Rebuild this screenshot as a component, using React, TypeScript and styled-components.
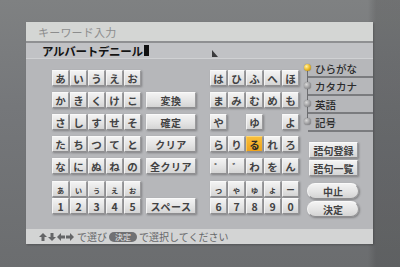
import styled, { createGlobalStyle, css } from 'styled-components';

const GlobalStyle = createGlobalStyle`
    html, body {
        margin: 0;
        padding: 0;
    }
    body {
        font-family: "Noto Sans CJK JP", "Noto Sans", sans-serif;
    }
`

const Screen = styled.div`
    width: 400px;
    height: 267px;
    box-sizing: border-box;
    padding: 22px 27px 0 26px;
    background:
        linear-gradient(90deg, rgba(0,0,0,0) 0%, rgba(0,0,0,0) 92%, rgba(0,0,0,0.12) 94%, rgba(0,0,0,0.12) 100%),
        linear-gradient(180deg, #7f8182 0%, #75777a 40%, #6b6d6f 100%);
    overflow: hidden;
`

const Panel = styled.div`
    width: 347px;
    height: 222px;
    display: flex;
    flex-direction: column;
    background: #b6b7ba;
    box-shadow: 1px 1px 2px rgba(0,0,0,0.25);
`

const TitleBar = styled.div`
    height: 19px;
    display: flex;
    align-items: center;
    padding-left: 12px;
    background: #d4d6d4;
    color: #8c8d8d;
    font-size: 11px;
    letter-spacing: 0.2px;
`

const InputRow = styled.div`
    height: 15px;
    display: flex;
    align-items: center;
    padding-left: 16px;
    background: #c1c2c5;
    border-top: 2px solid #8f9092;
    border-bottom: 1px solid #d0d1d3;
    position: relative;
`

const InputText = styled.span`
    font-size: 11.5px;
    font-weight: 700;
    color: #141414;
    letter-spacing: -0.3px;
`

const Caret = styled.span`
    display: inline-block;
    width: 5px;
    height: 11px;
    background: #111;
    margin-left: 1px;
`

const Pointer = styled.svg`
    position: absolute;
    left: 186px;
    top: 7px;
`

const Body = styled.div`
    flex: 1;
    display: flex;
    padding: 11px 0 0 26px;
`

const KeyGrid = styled.div<{ cols: string }>`
    display: grid;
    grid-template-columns: ${p => p.cols};
    grid-template-rows: repeat(4, 22px) 23px 17px 17px;
    column-gap: 1px;
    align-items: start;
`

const Key = styled.div<{ active?: boolean; small?: boolean }>`
    height: 16px;
    display: flex;
    align-items: center;
    justify-content: center;
    box-sizing: border-box;
    background: linear-gradient(180deg, #f3f3f3 0%, #e2e2e2 60%, #d4d4d4 100%);
    border-top: 1px solid #fafafa;
    border-left: 1px solid #f4f4f4;
    border-right: 1px solid #9a9a9c;
    border-bottom: 1px solid #8e8e90;
    box-shadow: 1px 1px 2px rgba(0,0,0,0.3);
    color: #424243;
    font-size: ${p => (p.small ? '8.5px' : '10.5px')};
    font-weight: 700;
    ${p => p.active && css`
        background: linear-gradient(180deg, #f8be3a 0%, #eea21a 100%);
        border-top-color: #fbd77a;
        border-left-color: #f8c85a;
        color: #2a2a2a;
    `}
`

const FuncKey = styled(Key)`
    width: 50px;
    justify-self: end;
    font-size: 10px;
    letter-spacing: 0.5px;
`

const Gap = styled.div``

const RightKeys = styled.div`
    margin-left: 14px;
`

const SideColumn = styled.div`
    margin-left: 1px;
    margin-top: -10px;
    flex: 1;
    display: flex;
    flex-direction: column;
`

const ModeList = styled.div`
    position: relative;
    padding-left: 8px;
    &::before {
        content: '';
        position: absolute;
        left: 7px;
        top: 8px;
        height: 56px;
        width: 1px;
        background: #6c6d70;
    }
`

const ModeItem = styled.div`
    height: 16px;
    display: flex;
    align-items: center;
    padding-left: 7px;
    border-bottom: 2px solid #7a7b7e;
    position: relative;
    font-size: 10.5px;
    color: #2c2c2c;
    font-weight: 500;
`

const Radio = styled.span<{ on?: boolean }>`
    position: absolute;
    left: -4px;
    top: 4px;
    width: 7px;
    height: 7px;
    border-radius: 50%;
    background: ${p => (p.on
        ? 'radial-gradient(circle at 35% 35%, #fff2a8 0%, #f0c030 45%, #a87808 100%)'
        : 'radial-gradient(circle at 35% 35%, #d8d8d8 0%, #9a9a9c 55%, #66676a 100%)')};
    box-shadow: 0 0 1px rgba(0,0,0,0.5);
`

const ButtonStack = styled.div`
    display: flex;
    flex-direction: column;
    align-items: flex-start;
    margin-top: 10px;
    padding-left: 9px;
    gap: 2px;
`

const Spacer = styled.div`
    height: 3px;
`

const PhraseButton = styled(Key)`
    width: 49px;
    font-size: 10px;
`

const PillButton = styled(Key)`
    width: 52px;
    border-radius: 8px;
    margin-left: -2px;
    font-size: 10px;
`

const Footer = styled.div`
    height: 15px;
    display: flex;
    align-items: center;
    gap: 2px;
    padding-left: 13px;
    background: #d3d4d4;
    color: #666769;
    font-size: 10px;
`

const Arrows = styled.span`
    display: inline-flex;
    gap: 1px;
    margin-right: 1px;
`

const Badge = styled.span`
    display: inline-flex;
    align-items: center;
    justify-content: center;
    height: 10px;
    width: 28px;
    border-radius: 5px;
    background: #707173;
    color: #e8e8e8;
    font-size: 8px;
`

const Arrow = ({ rot }: { rot: number }) => (
    <svg width="8" height="8" viewBox="0 0 8 8" style={{ transform: `rotate(${rot}deg)` }}>
        <path d="M4 0 L8 4 L5.5 4 L5.5 8 L2.5 8 L2.5 4 L0 4 Z" fill="#646567" />
    </svg>
)

const leftRows = [
    ['あ', 'い', 'う', 'え', 'お'],
    ['か', 'き', 'く', 'け', 'こ'],
    ['さ', 'し', 'す', 'せ', 'そ'],
    ['た', 'ち', 'つ', 'て', 'と'],
    ['な', 'に', 'ぬ', 'ね', 'の'],
    ['ぁ', 'ぃ', 'ぅ', 'ぇ', 'ぉ'],
    ['1', '2', '3', '4', '5'],
]

const funcKeys = ['', '変換', '確定', 'クリア', '全クリア', '', 'スペース']

const rightRows = [
    ['は', 'ひ', 'ふ', 'へ', 'ほ'],
    ['ま', 'み', 'む', 'め', 'も'],
    ['や', '', 'ゆ', '', 'よ'],
    ['ら', 'り', 'る', 'れ', 'ろ'],
    ['゜', '゛', 'わ', 'を', 'ん'],
    ['っ', 'ゃ', 'ゅ', 'ょ', 'ー'],
    ['6', '7', '8', '9', '0'],
]

const modes = ['ひらがな', 'カタカナ', '英語', '記号']

const App = () => {
    return (
        <Screen>
            <GlobalStyle />
            <Panel>
                <TitleBar>キーワード入力</TitleBar>
                <InputRow>
                    <InputText>アルバートデニール</InputText>
                    <Caret />
                    <Pointer width="6" height="7" viewBox="0 0 6 7">
                        <path d="M0 0 L0 7 L6 7 Z" fill="#3a3a3c" />
                    </Pointer>
                </InputRow>
                <Body>
                    <KeyGrid cols="repeat(5, 17px) 54px">
                        {leftRows.map((row, r) => [
                            ...row.map((ch, c) => (
                                <Key key={`l${r}-${c}`} small={r === 5}>{ch}</Key>
                            )),
                            funcKeys[r]
                                ? <FuncKey key={`f${r}`}>{funcKeys[r]}</FuncKey>
                                : <Gap key={`f${r}`} />,
                        ])}
                    </KeyGrid>
                    <RightKeys>
                        <KeyGrid cols="repeat(5, 17px)">
                            {rightRows.map((row, r) =>
                                row.map((ch, c) =>
                                    ch
                                        ? <Key key={`r${r}-${c}`} small={r === 5 || (r === 4 && c < 2)} active={ch === 'る'}>{ch}</Key>
                                        : <Gap key={`r${r}-${c}`} />
                                )
                            )}
                        </KeyGrid>
                    </RightKeys>
                    <SideColumn>
                        <ModeList>
                            {modes.map((m, i) => (
                                <ModeItem key={m}>
                                    <Radio on={i === 0} />
                                    {m}
                                </ModeItem>
                            ))}
                        </ModeList>
                        <ButtonStack>
                            <PhraseButton>語句登録</PhraseButton>
                            <PhraseButton>語句一覧</PhraseButton>
                            <Spacer />
                            <PillButton>中止</PillButton>
                            <PillButton>決定</PillButton>
                        </ButtonStack>
                    </SideColumn>
                </Body>
                <Footer>
                    <Arrows>
                        <Arrow rot={0} />
                        <Arrow rot={180} />
                        <Arrow rot={270} />
                        <Arrow rot={90} />
                    </Arrows>
                    <span>で選び</span>
                    <Badge>決定</Badge>
                    <span>で選択してください</span>
                </Footer>
            </Panel>
        </Screen>
    )
}

export default App;
